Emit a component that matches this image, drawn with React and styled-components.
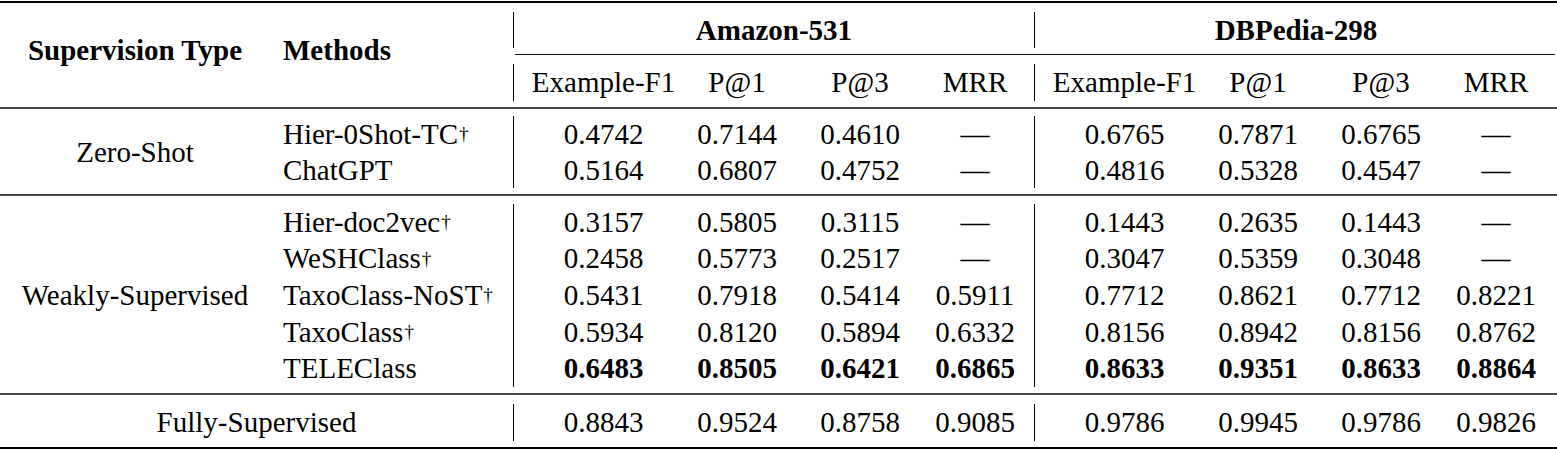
import styled, { createGlobalStyle } from "styled-components";

const GlobalStyle = createGlobalStyle`
  html, body {
    margin: 0;
    padding: 0;
    background: #fff;
  }
  body {
    font-family: "Liberation Serif", "DejaVu Serif", serif;
    color: #000;
  }
`;

// stub, methods, then 4 metric columns for each dataset
const COLS = "270px 243px 180px 88px 158px 95px 180px 88px 158px 97px";

const datasets = ["Amazon-531", "DBPedia-298"];
const metrics = ["Example-F1", "P@1", "P@3", "MRR"];

const groups = [
  {
    type: "Zero-Shot",
    row: 36,
    pad: "7px 0 6px",
    rows: [
      { name: "Hier-0Shot-TC", dag: true, vals: ["0.4742", "0.7144", "0.4610", "—", "0.6765", "0.7871", "0.6765", "—"] },
      { name: "ChatGPT", vals: ["0.5164", "0.6807", "0.4752", "—", "0.4816", "0.5328", "0.4547", "—"] },
    ],
  },
  {
    type: "Weakly-Supervised",
    row: 36.6,
    pad: "8px 0 6px",
    rows: [
      { name: "Hier-doc2vec", dag: true, vals: ["0.3157", "0.5805", "0.3115", "—", "0.1443", "0.2635", "0.1443", "—"] },
      { name: "WeSHClass", dag: true, vals: ["0.2458", "0.5773", "0.2517", "—", "0.3047", "0.5359", "0.3048", "—"] },
      { name: "TaxoClass-NoST", dag: true, vals: ["0.5431", "0.7918", "0.5414", "0.5911", "0.7712", "0.8621", "0.7712", "0.8221"] },
      { name: "TaxoClass", dag: true, vals: ["0.5934", "0.8120", "0.5894", "0.6332", "0.8156", "0.8942", "0.8156", "0.8762"] },
      { name: "TELEClass", best: true, vals: ["0.6483", "0.8505", "0.6421", "0.6865", "0.8633", "0.9351", "0.8633", "0.8864"] },
    ],
  },
];

const fully = ["0.8843", "0.9524", "0.8758", "0.9085", "0.9786", "0.9945", "0.9786", "0.9826"];

const Table = styled.div`
  width: 1557px;
  padding-top: 1px;
  display: flex;
  flex-direction: column;
  font-family: "Liberation Serif", "DejaVu Serif", serif;
  font-size: 29px;
  line-height: normal;
`;

const Rule = styled.div`
  height: 2px;
  background: ${(p) => (p.$heavy ? "#000" : "#4a4a4a")};
`;

const Section = styled.div`
  display: grid;
  grid-template-columns: ${COLS};
  grid-auto-rows: ${(p) => p.$row}px;
  padding: ${(p) => p.$pad};
`;

const HeadSection = styled(Section)`
  grid-template-rows: 36px 16px 37px;
`;

const Cell = styled.div`
  display: flex;
  align-items: center;
  justify-content: ${(p) => (p.$left ? "flex-start" : "center")};
  padding-left: ${(p) => (p.$left ? "13px" : "0")};
  padding-right: ${(p) => p.$tail || 0}px;
  border-left: ${(p) => (p.$bar ? "1px solid #000" : "none")};
  font-weight: ${(p) => (p.$bold ? 700 : 400)};
  white-space: nowrap;
`;

const StubHead = styled(Cell)`
  grid-row: 1 / span 3;
  padding-bottom: 12px;
  font-weight: 700;
`;

const GroupName = styled(Cell)`
  grid-row: 1;
  grid-column: ${(p) => p.$start} / span 4;
  font-weight: 700;
`;

const CMidRule = styled.div`
  grid-row: 2;
  grid-column: 3 / -1;
  align-self: start;
  height: 1px;
  margin: 6px 2px 0 2px;
  background: #111;
`;

const TypeCell = styled(Cell)`
  grid-column: ${(p) => (p.$wide ? "1 / span 2" : "1")};
  grid-row: 1 / span ${(p) => p.$span};
`;

const Dag = styled.span`
  font-size: 0.66em;
  line-height: 0;
  vertical-align: 0.52em;
  margin-left: 1px;
`;

// bar before each dataset block, extra right padding on the last metric
const barAt = (i) => i % 4 === 0;
const tailAt = (i) => (i === 3 ? 23 : i === 7 ? 25 : 0);

function Values({ vals, bold }) {
  return vals.map((v, i) => (
    <Cell key={i} $bar={barAt(i)} $tail={tailAt(i)} $bold={bold}>
      {v}
    </Cell>
  ));
}

export default function App() {
  return (
    <>
      <GlobalStyle />
      <Table>
        <Rule $heavy />
        <HeadSection $pad="9px 0 6px">
          <StubHead style={{ gridColumn: 1 }}>Supervision Type</StubHead>
          <StubHead $left style={{ gridColumn: 2 }}>
            Methods
          </StubHead>
          {datasets.map((d, i) => (
            <GroupName key={d} $start={3 + i * 4} $bar>
              {d}
            </GroupName>
          ))}
          <CMidRule />
          {datasets.map((d) =>
            metrics.map((m, j) => {
              const i = datasets.indexOf(d) * 4 + j;
              return (
                <Cell key={d + m} $bar={barAt(i)} $tail={tailAt(i)} style={{ gridRow: 3 }}>
                  {m}
                </Cell>
              );
            })
          )}
        </HeadSection>
        <Rule />
        {groups.map((g) => (
          <div key={g.type}>
            <Section $row={g.row} $pad={g.pad}>
              <TypeCell $span={g.rows.length}>{g.type}</TypeCell>
              {g.rows.map((r) => (
                <Row key={r.name} r={r} />
              ))}
            </Section>
            <Rule />
          </div>
        ))}
        <Section $row={37} $pad="9px 0 6px">
          <TypeCell $span={1} $wide>
            Fully-Supervised
          </TypeCell>
          <Values vals={fully} />
        </Section>
        <Rule $heavy />
      </Table>
    </>
  );
}

function Row({ r }) {
  return (
    <>
      <Cell $left style={{ gridColumn: 2 }}>
        {r.name}
        {r.dag && <Dag>†</Dag>}
      </Cell>
      <Values vals={r.vals} bold={r.best} />
    </>
  );
}
